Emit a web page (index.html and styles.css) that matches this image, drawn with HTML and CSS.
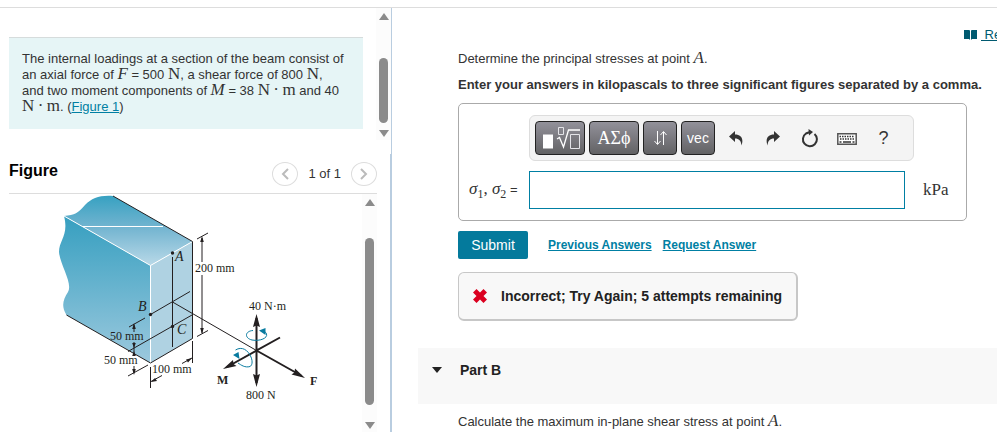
FILE: index.html
```html
<!DOCTYPE html>
<html lang="en">

<head>
  <meta charset="UTF-8">
  <meta name="viewport" content="width=device-width, initial-scale=1.0">
  <title>Principal Stresses</title>
  <link rel="stylesheet" href="styles.css">
</head>

<body>
  <div class="page">
    <aside class="left">
      <section class="problem">
        <div class="intro">
          The internal loadings at a section of the beam consist of an axial force of <i class="math">F</i> = 500 <span class="math">N</span>, a shear force of 800 <span class="math">N</span>, and two moment components of <i class="math">M</i> = 38 <span class="math">N&thinsp;·&thinsp;m</span> and 40 <span class="math">N&thinsp;·&thinsp;m</span>. (<a href="#figure">Figure 1</a>)
        </div>
        <div class="scrollbar">
          <span class="up"></span>
          <span class="thumb short"></span>
          <span class="down"></span>
        </div>
      </section>

      <section class="figure" id="figure">
        <div class="figure-head">
          <h2>Figure</h2>
          <div class="pager">
            <button class="round" aria-label="Previous figure"><svg width="8" height="12" viewBox="0 0 8 12"><path d="M7 1L2 6l5 5" /></svg></button>
            <span>1 of 1</span>
            <button class="round" aria-label="Next figure"><svg width="8" height="12" viewBox="0 0 8 12"><path d="M1 1l5 5-5 5" /></svg></button>
          </div>
        </div>
        <div class="figure-body">
          <svg class="beam" width="353" height="238" viewBox="9 194 353 238">
            <defs>
              <linearGradient id="side" x1="0" y1="0" x2="0" y2="1">
                <stop offset="0" stop-color="#369fc0" />
                <stop offset="1" stop-color="#9cc9de" />
              </linearGradient>
              <linearGradient id="top" x1="0" y1="0" x2="0" y2="1">
                <stop offset="0" stop-color="#37a1c1" />
                <stop offset=".45" stop-color="#72b4d0" />
                <stop offset="1" stop-color="#b9d9e8" />
              </linearGradient>
            </defs>

            <!-- beam -->
            <path fill="url(#top)" d="M64 216C75 215 78 213 85 205C92 198 100 195 113 196L192.500 241.500L150.500 265.500Z" />
            <path fill="url(#side)" d="M64 216L150.500 265.500V363L66.500 315C61 306 63 300 68 292C73 283 60 265 59 252C59 240 69 235 64 216Z" />
            <path fill="#afd2e2" d="M150.500 265.500L192.500 241.500V338.500L150.500 363Z" />
            <path class="white" d="M64 216L150.500 265.500V363M150.500 265.500L192.500 241.500M83 226.500H163" />
            <path class="line" d="M113 196L192.500 241.500V338.500L150.500 363L66.500 315" />

            <!-- section lines -->
            <path class="line" d="M172.500 257V347M150.500 314.500L190 291.500M128 351.500L192 315M172.500 302L256.500 350.500" />
            <circle cx="172.500" cy="253" r="1.700" />
            <circle cx="150.500" cy="314.500" r="1.700" />
            <circle cx="172.500" cy="326.500" r="1.700" />

            <!-- dimensions -->
            <path class="dim" d="M197 239l11-6M197 336.500l11-6M202 238v24M202 275v58M129 327l16-9M128 376l20-11M134 325v7M134 342v13M134 366v7M150.500 367v21M192.500 341v22M151 381.500l11-6M182 363.500l10-5.500" />
            <path d="M202 236l-1.800 6h3.600zM202 334l-1.800-6h3.600zM134 323l-1.800 6h3.600zM134 348l-1.800-5h3.600zM134 351l-1.800 5h3.600zM134 375l-1.800-6h3.600zM151 382l4-4 2 3zM192 358l-6 1.500 2 3z" />

            <!-- loads -->
            <path class="load" d="M256.500 318v65M227 367L280 337.500M256.500 350.500L301 375.500" />
            <path d="M256.500 314l-3.500 13 3.500-1.500 3.500 1.500zM256.500 387l-3.500-13 3.500 1.500 3.500-1.500zM305 378l-13.500-3.500 3-2 .5-4zM223 369l10-9 .5 4 3 2z" />
            <path class="moment" d="M253 330.500C245 331 244 338 252 340C260 341.500 268 338 266.500 334C266 332 264 331 262 331" />
            <path class="moment" d="M250 366.500C245 368 241 365 238 363M235.500 350C242 346 248 350 251 357C253 362 252 365.500 250 366.500" />
            <path fill="#087ba0" d="M259 330.500l6.500-2.500v7zM233 355l5.500-3 1 7z" />

            <text x="195" y="272">200 mm</text>
            <text x="110" y="340">50 mm</text>
            <text x="104" y="364">50 mm</text>
            <text x="152" y="373">100 mm</text>
            <text x="249" y="310">40 N·m</text>
            <text x="246" y="399">800 N</text>
            <text class="point" x="175" y="261">A</text>
            <text class="point" x="138" y="311">B</text>
            <text class="point" x="177" y="334">C</text>
            <text class="vector" x="217" y="384">M</text>
            <text class="vector" x="310" y="385">F</text>
          </svg>
          <div class="scrollbar">
            <span class="up"></span>
            <span class="thumb"></span>
            <span class="down"></span>
          </div>
        </div>
      </section>
    </aside>

    <main class="right">
      <nav class="review">
        <svg width="13" height="10" viewBox="0 0 13 10"><path d="M0 0h5l1 .5v9.500L5 9H0zM13 0H8l-1 .5V10l1-1h5z" /></svg>
        <a href="#review">&nbsp;Review</a>
      </nav>

      <section class="part-a">
        <p>Determine the principal stresses at point <i class="math">A</i>.</p>
        <p class="instructions">Enter your answers in kilopascals to three significant figures separated by a comma.</p>

        <div class="answer">
          <div class="toolbar">
            <button class="tool wide" aria-label="Templates">
              <svg width="40" height="24" viewBox="0 0 40 24" fill="none" stroke="#e4e4e8">
                <path fill="#fff" stroke="none" d="M3 8.500h10v14H3z" />
                <path d="M18.500 1.500h5v7h-5zM30.500 8.500h9v14h-9z" />
                <path stroke="#fff" stroke-width="1.300" d="M17 13l2.500-1.500 4 9.500L28.500 4H40" />
              </svg>
            </button>
            <button class="tool wide greek">ΑΣϕ</button>
            <button class="tool" aria-label="Subscripts">
              <svg width="14" height="16" viewBox="0 0 14 16" fill="none" stroke="#fff">
                <path d="M4.500 1v13M1.500 11l3 3.500 3-3.500M10.500 15V2M7.500 5l3-3.500 3 3.500" />
              </svg>
            </button>
            <button class="tool">vec</button>
            <button class="plain" aria-label="Undo"><svg width="14" height="15" viewBox="0 0 14 15"><path d="M0 5.500L6 0v3.500c6 0 9 4 6.500 11C12 9.500 10 7.500 6 7.500V11z" /></svg></button>
            <button class="plain" aria-label="Redo"><svg width="14" height="15" viewBox="0 0 14 15"><path d="M14 5.500L8 0v3.500c-6 0-9 4-6.500 11C2 9.500 4 7.500 8 7.500V11z" /></svg></button>
            <button class="plain" aria-label="Reset"><svg width="18" height="19" viewBox="0 0 18 19"><path fill="none" stroke="#333" stroke-width="2" d="M13.500 5A7 7 0 1 1 5 4.500L9 3" /><path d="M7.500 0L12 3 8 6.500z" /></svg></button>
            <button class="plain" aria-label="Keyboard"><svg width="20" height="12" viewBox="0 0 20 12"><path fill="#fff" stroke="#555" stroke-width="1.500" d="M.8.8h18.400v10.400H.8z" /><path stroke="#333" stroke-width="1.500" stroke-dasharray="1.500 1" d="M2.500 3.500h15M3 6h14" /><path stroke="#333" stroke-width="1.500" d="M2.500 9h2M6 9h8M15.500 9h2" /></svg></button>
            <button class="plain help" aria-label="Help">?</button>
          </div>
          <label for="stress"><i class="math">σ</i><sub>1</sub><span class="math">, </span><i class="math">σ</i><sub>2</sub> =</label>
          <input type="text" id="stress">
          <span class="math unit">kPa</span>
        </div>

        <div class="actions">
          <button class="submit">Submit</button>
          <a href="#previous">Previous Answers</a>
          <a href="#request">Request Answer</a>
        </div>

        <div class="feedback">
          <svg width="14" height="14" viewBox="0 0 14 14"><path d="M3.500 0L7 3.500 10.500 0 14 3.500 10.500 7l3.500 3.500-3.500 3.500L7 10.500 3.500 14 0 10.500 3.500 7 0 3.500z" /></svg>
          Incorrect; Try Again; 5 attempts remaining
        </div>
      </section>

      <h2 class="part-head"><span class="caret"></span>Part B</h2>
      <p class="part-b">Calculate the maximum in-plane shear stress at point <i class="math">A</i>.</p>
    </main>
  </div>
</body>

</html>
```
FILE: styles.css
```css
* {
  box-sizing: border-box;
}

body {
  margin: 0;
  padding-top: 7px;
  height: 100vh;
  overflow: hidden;
  font-family: "Liberation Sans", Arial, sans-serif;
  font-size: 13px;
  line-height: 16px;
  color: #333;
  background: #fff;
}

h2,
p {
  margin: 0;
}

button {
  font-family: inherit;
  padding: 0;
  border: none;
  cursor: pointer;
}

a {
  color: #007fa3;
}

.math {
  font-family: "Liberation Serif", "Times New Roman", serif;
  font-size: 17px;
  line-height: 14px;
  white-space: nowrap;
}

.page {
  display: flex;
  height: 100%;
  border-top: 1px solid #ddd;
}

.left {
  display: flex;
  flex-direction: column;
  flex: 0 0 392px;
}

.problem {
  display: flex;
  justify-content: space-between;
  height: 146px;
  padding-left: 9px;
  border-right: 1px solid #b9cde0;
}

.intro {
  width: 354px;
  height: 92px;
  margin-top: 29px;
  padding: 13px 18px 0 13px;
  border-top: 1px solid #d6dcdc;
  background: #e6f5f6;
}

.scrollbar {
  display: flex;
  flex-direction: column;
  align-items: center;
  justify-content: space-between;
  width: 15px;
  padding: 5px 0 3px;
  background: #fcfcfc;
}

.problem .scrollbar {
  height: 132px;
}

.up,
.down,
.caret {
  border: 5px solid transparent;
}

.up {
  border-top: none;
  border-bottom: 7px solid #8b8b8b;
}

.down {
  border-bottom: none;
  border-top: 7px solid #8b8b8b;
}

.thumb {
  flex: 1;
  width: 9px;
  margin: 32px 0 17px;
  border-radius: 5px;
  background: #8b8b8b;
}

.thumb.short {
  margin: 38px 0 7px;
}

.figure {
  display: flex;
  flex-direction: column;
  flex: 1;
  padding-left: 9px;
  border-right: 2px solid #b9cde0;
}

.figure-head {
  display: flex;
  align-items: center;
  justify-content: space-between;
  height: 40px;
  margin-right: 13px;
  border-bottom: 1px solid #ddd;
}

.figure-head h2 {
  padding-bottom: 5px;
  font-size: 16px;
  color: #000;
}

.pager {
  display: flex;
  align-items: center;
  gap: 10px;
}

.round {
  display: flex;
  align-items: center;
  justify-content: center;
  width: 26px;
  height: 24px;
  border: 1px solid #ddd;
  border-radius: 50%;
  background: #fff;
}

.round path {
  fill: none;
  stroke: #bbb;
  stroke-width: 2;
}

.figure-body {
  display: flex;
  flex: 1;
}

.beam {
  font-family: "Liberation Serif", "Times New Roman", serif;
  font-size: 12px;
  fill: #231f20;
}

.beam .point {
  font-size: 14px;
  font-style: italic;
}

.beam .vector {
  font-weight: bold;
}

.white,
.line,
.dim,
.load,
.moment {
  fill: none;
  stroke: #231f20;
}

.white {
  stroke: #fff;
}

.load {
  stroke-width: 2;
}

.moment {
  stroke: #087ba0;
}

.right {
  flex: 1;
  min-width: 0;
  padding-left: 26px;
}

.review {
  display: flex;
  align-items: center;
  gap: 4px;
  width: 33px;
  margin: 19px 0 0 auto;
  white-space: nowrap;
}

.review svg {
  flex: none;
  fill: #005a70;
}

.review a {
  color: #005a70;
}

.part-a {
  padding: 8px 0 0 40px;
}

.instructions {
  margin-top: 10px;
  font-weight: bold;
  white-space: nowrap;
}

.answer {
  display: grid;
  grid-template-columns: 60px 1fr 61px;
  row-gap: 10px;
  align-items: center;
  margin: 10px 30px 0 0;
  padding: 11px 0 11px 10px;
  border: 1px solid #aaa;
  border-radius: 5px;
}

.toolbar {
  grid-column: 2 / 4;
  justify-self: start;
  display: flex;
  align-items: center;
  gap: 4px;
  padding: 5px 13px 5px 5px;
  border: 1px solid #ddd;
  border-radius: 6px;
  background: #f4f4f4;
}

.tool {
  display: flex;
  align-items: center;
  justify-content: center;
  width: 34px;
  height: 34px;
  border: 1px solid #222;
  border-radius: 4px;
  background: linear-gradient(#92919a, #626264);
  color: #fff;
  font-size: 14px;
}

.tool.wide {
  width: 50px;
}

.tool.greek {
  font-family: "Liberation Serif", "Times New Roman", serif;
  font-size: 18px;
}

.plain {
  width: 33px;
  height: 34px;
  background: none;
  color: #333;
}

.plain svg {
  fill: #333;
  vertical-align: middle;
}

.plain.help {
  font-size: 18px;
}

.answer input {
  min-width: 0;
  height: 38px;
  padding: 0 8px;
  border: 1px solid #007fa3;
  font-size: 16px;
}

.answer sub {
  font-family: "Liberation Serif", "Times New Roman", serif;
  font-size: 12px;
  line-height: 0;
}

.unit {
  margin-left: 18px;
}

.actions {
  display: flex;
  align-items: center;
  gap: 11px;
  margin-top: 10px;
  font-size: 12px;
  font-weight: bold;
}

.submit {
  width: 70px;
  height: 28px;
  margin-right: 9px;
  border-radius: 2px;
  background: #047a9c;
  color: #fff;
  font-size: 14px;
}

.feedback {
  display: inline-flex;
  align-items: center;
  gap: 14px;
  height: 49px;
  margin-top: 13px;
  padding: 0 14px;
  border: 1px solid #c7c7c7;
  border-right-width: 2px;
  border-bottom-width: 2px;
  border-radius: 6px;
  background: #f8f8f8;
  color: #222;
  font-size: 14px;
  font-weight: bold;
}

.feedback svg {
  fill: #db0020;
}

.part-head {
  display: flex;
  align-items: center;
  gap: 18px;
  height: 56px;
  margin-top: 27px;
  padding: 0 14px 12px;
  background: #f8f8f8;
  color: #222;
  font-size: 14px;
}

.caret {
  border-bottom: none;
  border-top: 6px solid #222;
}

.part-b {
  margin-top: 10px;
  padding-left: 40px;
}
```
